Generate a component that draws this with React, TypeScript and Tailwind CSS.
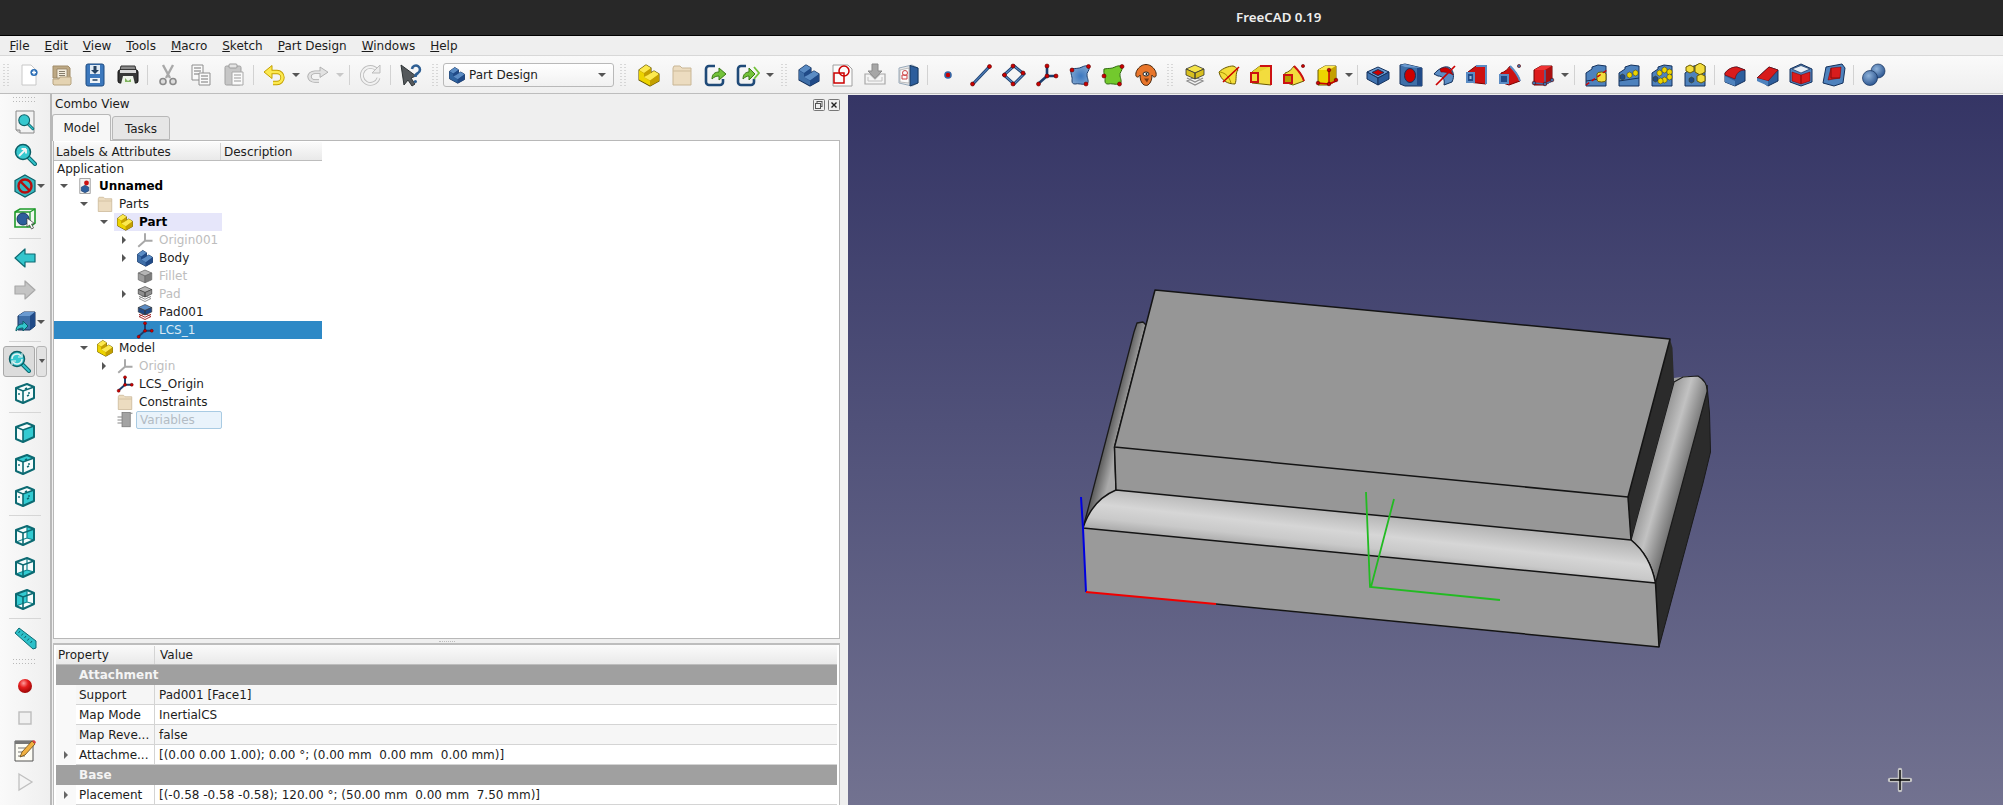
import React from "react";

type P = { children?: React.ReactNode; size?: number };
const I = ({ children, size = 24 }: P) => (
  <svg width={size} height={size} viewBox="0 0 24 24" className="block shrink-0">
    {children}
  </svg>
);

const Dot = ({ x, y, r = 2, c = "#cc0000" }: { x: number; y: number; r?: number; c?: string }) => (
  <circle cx={x} cy={y} r={r} fill={c} stroke="#5c0000" strokeWidth={0.6} />
);

const Y = { t: "#fce94f", l: "#edd400", r: "#c4a000", s: "#6b5a00" };
const B = { t: "#5b8cc4", l: "#3f6fa8", r: "#204a87", s: "#14315c" };
const G = { t: "#b5b5b5", l: "#9c9c9c", r: "#7d7d7d", s: "#6a6a6a" };

const LBlock = ({ t, l, r, s, size }: { t: string; l: string; r: string; s: string; size?: number }) => (
  <I size={size}>
    <path d="M2 7L9 2L14 5V10L17 8L22 11V18L13 23L2 17Z" fill={r} stroke={s} strokeWidth={1.1} strokeLinejoin="round" />
    <path d="M2 7L9 2L14 5L7 10Z" fill={t} />
    <path d="M2 7.500L7 10.500V14L13 18V22.500L2 16.500Z" fill={l} />
    <path d="M7 10.500L14 5.500V10L11 12L7 14Z" fill={r} />
    <path d="M7 14L11 12L17 8L22 11L13 17.500Z" fill={t} />
    <path d="M13 18L22 11.500V18L13 23Z" fill={r} />
  </I>
);

const Box = ({ t, l, r, s, size }: { t: string; l: string; r: string; s: string; size?: number }) => (
  <I size={size}>
    <path d="M12 4L21 8L12 12L3 8Z" fill={t} stroke={s} strokeLinejoin="round" />
    <path d="M3 8L12 12V21L3 17Z" fill={l} stroke={s} strokeLinejoin="round" />
    <path d="M21 8L12 12V21L21 17Z" fill={r} stroke={s} strokeLinejoin="round" />
  </I>
);

const Folder = ({ size }: P) => (
  <I size={size}>
    <path d="M3 5l1-2h6l2 2h9v17H3z" fill="#ecdcc0" stroke="#c9b695" />
    <path d="M3 8h18" stroke="#cdbb9b" />
  </I>
);

const IOpen = () => (
  <I>
    <path d="M3 3h15l2 2v10H3z" fill="#bda884" stroke="#a08b68" />
    <path d="M7 6h10v9H7z" fill="#f3ecdc" stroke="#8b7a5c" strokeWidth={0.7} />
    <path d="M9 8.500h6M9 10.500h6M9 12.500h6" stroke="#6b6250" strokeWidth={0.8} />
    <path d="M3 16h6l1-2h11v7l-1 1H4l-1-1z" fill="#e4d3b2" stroke="#b7a480" />
  </I>
);
const INew = () => (
  <I>
    <path d="M5 2h9l5 5v15H5z" fill="#fff" stroke="#c8c8c8" />
    <circle cx={17} cy={9.5} r={3.6} fill="#2a6db5" />
    <path d="M15 9.500h4M17 7.500v4" stroke="#fff" strokeWidth={1.4} />
  </I>
);
const ISave = () => (
  <I>
    <rect x={3} y={1} width={18} height={22} rx={2} fill="#3c78bd" stroke="#1c4a80" />
    <path d="M7 2h10v9H7z" fill="#dfe9f3" />
    <path d="M10.500 3h3v4h2.500l-4 4-4-4h2.500z" fill="#24405f" />
    <path d="M7 15h10v5H7z" fill="#eef3f8" />
    <path d="M9.500 17h5" stroke="#24405f" strokeWidth={1.5} />
  </I>
);
const IPrint = () => (
  <I>
    <path d="M5 3h14l1 4H4z" fill="#8a8a8a" stroke="#333" />
    <rect x={2} y={7} width={20} height={13} rx={2} fill="#363636" stroke="#111" />
    <path d="M4 7h16v3H4z" fill="#d8d8d8" />
    <path d="M7 13h10l2 8H5z" fill="#eef3ea" />
    <path d="M9 15l3 3 3-2v3H9z" fill="#7fb35e" />
  </I>
);
const ICut = () => (
  <I>
    <path d="M7 2l7 13M17 2l-7 13" stroke="#a9a9a9" strokeWidth={2.4} fill="none" />
    <circle cx={7} cy={18.5} r={3} fill="#dcdcdc" stroke="#8a8a8a" strokeWidth={1.6} />
    <circle cx={17} cy={18.5} r={3} fill="#dcdcdc" stroke="#8a8a8a" strokeWidth={1.6} />
  </I>
);
const ICopy = () => (
  <I>
    <path d="M3 2h11v15H3z" fill="#fafafa" stroke="#8e8e8e" />
    <path d="M5 5h7M5 8h7M5 11h7" stroke="#777" />
    <path d="M10 10h11v12H10z" fill="#fafafa" stroke="#8e8e8e" />
    <path d="M12 13h7M12 16h7M12 19h7" stroke="#777" />
  </I>
);
const IPaste = () => (
  <I>
    <rect x={3} y={3} width={16} height={19} rx={1.5} fill="#c6c6c6" stroke="#a0a0a0" />
    <rect x={7} y={1} width={8} height={4} rx={1} fill="#e4e4e4" stroke="#9c9c9c" />
    <path d="M10 9h11v13H10z" fill="#fafafa" stroke="#a8a8a8" />
    <path d="M12 12h7M12 15h7M12 18h7" stroke="#999" />
  </I>
);
const Curl = ({ a, b }: { a: string; b: string }) => (
  <>
    <path d="M6 9h9a5.500 5.500 0 0 1 0 11h-4" fill="none" stroke={b} strokeWidth={4.4} />
    <path d="M10 2.500L2 9l8 6.500z" fill={a} stroke={b} strokeLinejoin="round" />
    <path d="M8 9h7a5.500 5.500 0 0 1 0 11h-4" fill="none" stroke={a} strokeWidth={2.6} />
  </>
);
const IUndo = () => (
  <I>
    <Curl a="#fce94f" b="#c4a000" />
  </I>
);
const IRedo = () => (
  <I>
    <g transform="translate(24 2) scale(-1 0.8)">
      <Curl a="#e2e2e2" b="#acacac" />
    </g>
  </I>
);
const IRefresh = () => (
  <I>
    <path d="M18 7a8.500 8.500 0 1 0 1.500 8" fill="none" stroke="#bdbdbd" strokeWidth={3.8} />
    <path d="M18 7a8.500 8.500 0 1 0 1.500 8" fill="none" stroke="#f2f2f2" strokeWidth={2} />
    <path d="M21 2v8h-8z" fill="#ececec" stroke="#bdbdbd" />
  </I>
);
const IHelp = () => (
  <I>
    <path d="M2 2l3 20 4-5 4 6 3-2-4-6 5-2z" fill="#55595c" stroke="#2e3436" strokeLinejoin="round" />
    <path d="M13 6a4 4 0 1 1 6 4c-2 1-2.600 2-2.600 4" fill="none" stroke="#2f5f93" strokeWidth={2.6} />
    <circle cx={16.4} cy={18.5} r={1.6} fill="#2f5f93" />
  </I>
);
const ILinkA = () => (
  <I>
    <path d="M12 3H6a3 3 0 0 0-3 3v13a3 3 0 0 0 3 3h11a3 3 0 0 0 3-3v-3" fill="none" stroke="#1f4a78" strokeWidth={2.6} />
    <path d="M9 16c0-5 3-7 7-7V5l7 6-7 6v-4c-3 0-5 1-7 3z" fill="#73c23a" stroke="#3b7a16" strokeLinejoin="round" />
  </I>
);
const ILinkB = () => (
  <I>
    <path d="M10 3H5a3 3 0 0 0-3 3v13a3 3 0 0 0 3 3h10a3 3 0 0 0 3-3v-3" fill="none" stroke="#1f4a78" strokeWidth={2.6} />
    <path d="M7 16c0-5 3-7 6-7V5l6 6-6 6v-4c-2 0-4 1-6 3z" fill="#73c23a" stroke="#3b7a16" strokeLinejoin="round" />
    <path d="M18 4l5 6-5 6" fill="none" stroke="#73c23a" strokeWidth={1.8} />
  </I>
);
const ISketch = () => (
  <I>
    <path d="M3 2h15l4 4v17H3z" fill="#fbfbfb" stroke="#a0a0a0" />
    <rect x={4} y={10} width={10} height={10} fill="none" stroke="#cc0000" strokeWidth={1.5} />
    <circle cx={14} cy={8} r={5} fill="none" stroke="#cc0000" strokeWidth={1.5} />
  </I>
);
const IAttach = () => (
  <I>
    <path d="M9 1h6v7h4l-7 7-7-7h4z" fill="#a6a6a6" stroke="#8a8a8a" />
    <path d="M2 11h5l5 5 5-5h5v10H2z" fill="#f4f4f4" stroke="#a8a8a8" strokeWidth={1.2} />
    <path d="M5 14v4h14v-4" fill="none" stroke="#c0c0c0" />
  </I>
);
const IPlane = () => (
  <I>
    <path d="M3 5l13-3 6 3v15l-6 3-13-3z" fill="#e9e9e9" stroke="#99aabb" />
    <path d="M14 2.500l8 2.500v15l-8 3z" fill="#2d5e9c" stroke="#173860" />
    <path d="M4 7l9-2v15l-9-1z" fill="#fbfbfb" stroke="#999" strokeWidth={0.6} />
    <circle cx={9} cy={10} r={2.5} fill="none" stroke="#cc4444" />
    <path d="M6 12h5v4H6z" fill="none" stroke="#cc4444" />
  </I>
);
const IPoint = () => (
  <I>
    <circle cx={12} cy={12} r={3} fill="#cc0000" stroke="#3465a4" strokeWidth={1.6} />
  </I>
);
const ILine = () => (
  <I>
    <path d="M3 22L21 3" stroke="#1d3f6e" strokeWidth={3} />
    <path d="M3 22L21 3" stroke="#4a7ab5" strokeWidth={1.2} />
    <Dot x={3.5} y={21} />
    <Dot x={20.5} y={3.5} />
  </I>
);
const IDiamond = () => (
  <I>
    <path d="M12 3L22 11L12 21L2 12Z" fill="none" stroke="#1d3f6e" strokeWidth={3} />
    <path d="M12 3L22 11L12 21L2 12Z" fill="none" stroke="#5b8cc4" strokeWidth={1.1} />
    <Dot x={11} y={3} />
    <Dot x={21} y={10} />
    <Dot x={11} y={21} />
    <Dot x={2.5} y={12} />
  </I>
);
const Lcs = ({ size, a = "#1d3f6e", d = true }: { size?: number; a?: string; d?: boolean }) => (
  <I size={size}>
    <path d="M12 13V3M12 13H22M12 13L3 21" stroke={a} strokeWidth={2.6} fill="none" />
    {d && (
      <>
        <Dot x={12} y={3} />
        <Dot x={12} y={13} />
        <Dot x={21} y={13} />
        <Dot x={3.5} y={21} />
      </>
    )}
  </I>
);
const BLOB = "M3 6c5-1 7 0 11-2s6-1 7 0c1 4-3 5-2 9s2 6 0 8c-5 1-9-1-12 0-2 0-3-1-3-3 1-4-2-7-1-12z";
const IFace = () => (
  <I>
    <defs>
      <radialGradient id="rgFace" cx="0.55" cy="0.55" r="0.6">
        <stop offset="0" stopColor="#3c78c0" />
        <stop offset="1" stopColor="#7fa6d0" />
      </radialGradient>
    </defs>
    <path d={BLOB} fill="url(#rgFace)" stroke="#1d3f6e" />
    <Dot x={4} y={7} />
    <Dot x={20.5} y={3.5} />
    <Dot x={18} y={21} />
  </I>
);
const IGreen = () => (
  <I>
    <path d={BLOB} fill="#73c92d" stroke="#2f6b10" />
    <Dot x={21} y={3.5} />
    <Dot x={3} y={13} />
    <Dot x={18.5} y={21} />
  </I>
);
const IGnu = () => (
  <I>
    <path d="M7 3c3-2 7-2 10 0 3 2 6 6 5 10-1 2-3 1-4-1 0 4-1 8-4 10-2 1-3 0-4 0-3-2-4-6-4-10-1 2-3 3-4 1C1 9 4 5 7 3z" fill="#e8752a" stroke="#4a2a10" />
    <ellipse cx={12} cy={11} rx={3} ry={2} fill="#fff" stroke="#222" />
    <circle cx={12.5} cy={11} r={1} fill="#111" />
    <path d="M10 15.500l3 4 2-4z" fill="#7a3a12" />
  </I>
);
const PadIcon = ({ size, top, line = "#8c8c8c", side }: { size?: number; top: string; line?: string; side: string }) => (
  <I size={size}>
    <path d="M4 15l8 4 8-4M4 18l8 4 8-4-8-4z" fill="none" stroke={line} strokeWidth={1.2} />
    <path d="M12 2L21 6L12 10L3 6Z" fill={top} stroke="#333" strokeWidth={0.8} />
    <path d="M3 6v6l9 4V10zM21 6v6l-9 4V10z" fill={side} stroke="#333" strokeWidth={0.8} />
  </I>
);
const IRev = () => (
  <I>
    <path d="M3 9c4-4 10-6 14-6 1 0 4 2 5 4-3 3-1 10-3 14C12 21 5 18 3 9z" fill="#f4de3a" stroke="#6b5a00" />
    <path d="M3 9c4 0 10 3 12 11" fill="none" stroke="#a89200" />
    <path d="M7 19L23 4" stroke="#cc0000" strokeWidth={1.6} />
  </I>
);
const ILoft = () => (
  <I>
    <path d="M11 3h11v19l-19-2V9z" fill="#f2dc3e" stroke="#6b5a00" />
    <path d="M11 3h11L10 9 3 9z" fill="#e8d22e" />
    <path d="M11 3h11v19" fill="none" stroke="#cc1111" strokeWidth={2} />
    <rect x={2} y={10} width={7} height={9} fill="#f2dc3e" stroke="#cc1111" strokeWidth={2} />
  </I>
);
const IPipe = () => (
  <I>
    <path d="M12 3c4 4 8 8 10 15l-11 4-9-3 1-9c4-1 7-4 9-7z" fill="#f2dc3e" stroke="#6b5a00" />
    <path d="M12 3c4 4 8 8 10 15" fill="none" stroke="#cc1111" strokeWidth={2} />
    <rect x={2} y={12} width={8} height={8} fill="#b89d00" stroke="#cc1111" strokeWidth={2} />
    <Dot x={21} y={3} r={1.6} />
  </I>
);
const IPrim = ({ c = Y, dot = "#cc0000" }: { c?: typeof Y; dot?: string }) => (
  <I>
    <path d="M3 7l7-4h11v15l-7 4H3z" fill={c.l} stroke={c.s} />
    <path d="M3 7l7-4h11l-7 4z" fill={c.t} />
    <path d="M14 7v15l7-4V3z" fill={c.r} />
    <path d="M14 7v14M3 20l11 1 7-3" stroke={dot} fill="none" strokeWidth={1.5} />
    <Dot x={14} y={7} r={1.8} c={dot} />
    <Dot x={14} y={21} r={1.8} c={dot} />
    <Dot x={3} y={20} r={1.8} c={dot} />
    <Dot x={21} y={17} r={1.8} c={dot} />
  </I>
);
const IPocket = () => (
  <I>
    <path d="M12 4L23 9L12 15L1 9Z" fill="#6a9ad0" stroke="#14315c" strokeLinejoin="round" />
    <path d="M1 9L12 15V22L1 16Z" fill="#4174b0" stroke="#14315c" strokeLinejoin="round" />
    <path d="M23 9L12 15V22L23 16Z" fill="#2a5a9a" stroke="#14315c" strokeLinejoin="round" />
    <path d="M12 6.500L18 9.500L12 12.500L6 9.500Z" fill="#cc0000" stroke="#14315c" />
  </I>
);
const IHole = () => (
  <I>
    <path d="M1 2l5-1 17 4v18L6 23 1 21z" fill="#3f6fa8" stroke="#14315c" />
    <path d="M1 2l5-1 17 4-17-1z" fill="#6a9ad0" />
    <ellipse cx={11} cy={12.5} rx={5.5} ry={7} fill="#cc0000" stroke="#14315c" />
    <path d="M18 5l5 0v18l-5-1z" fill="#204a87" />
  </I>
);
const IGroove = () => (
  <I>
    <path d="M2 11c5-6 12-9 16-6 3 2 5 8 2 14l-8 3c1-6-1-9-6-9z" fill="#5b8cc4" stroke="#14315c" />
    <path d="M8 6c5-2 8-2 11 2l2 4c-4-3-9-3-12-3z" fill="#cc0000" stroke="#7a0000" strokeWidth={0.6} />
    <path d="M4 22L23 3" stroke="#cc0000" strokeWidth={1.7} />
  </I>
);
const ISubLoft = () => (
  <I>
    <path d="M11 3h10v18l-18-2V9z" fill="#cc1111" stroke="#7a0000" />
    <path d="M11 3h10v18" fill="none" stroke="#5b8cc4" strokeWidth={2} />
    <rect x={2} y={10} width={7} height={9} fill="#204a87" stroke="#5b8cc4" strokeWidth={2} />
    <rect x={4.5} y={13} width={2} height={3} fill="#9cb8d8" />
  </I>
);
const ISubPipe = () => (
  <I>
    <path d="M12 3c4 4 8 8 10 15l-11 4-9-3 1-9c4-1 7-4 9-7z" fill="#cc1111" stroke="#7a0000" />
    <path d="M12 3c4 4 8 8 10 15" fill="none" stroke="#5b8cc4" strokeWidth={2} />
    <rect x={2} y={12} width={8} height={8} fill="#204a87" stroke="#5b8cc4" strokeWidth={2} />
    <Dot x={21} y={3} r={1.6} c="#3f6fa8" />
  </I>
);
const ISubPrim = () => (
  <I>
    <path d="M3 7l7-4h11v15l-7 4H3z" fill="#dd1a1a" stroke="#6a0000" />
    <path d="M3 7l7-4h11l-7 4z" fill="#ee3333" />
    <path d="M14 7v15l7-4V3z" fill="#aa0f0f" />
    <path d="M14 7v14M3 20l11 1 7-3" stroke="#3f6fa8" fill="none" strokeWidth={1.5} />
    <Dot x={14} y={21} r={1.8} c="#3f6fa8" />
    <Dot x={3} y={20} r={1.8} c="#3f6fa8" />
    <Dot x={21} y={17} r={1.8} c="#3f6fa8" />
  </I>
);
const Slab = () => (
  <path d="M2 17L2 10L8 6V4L14 2L22 3V23H2Z" fill="#4e82bd" stroke="#14315c" strokeLinejoin="round" />
);
const Cubelet = ({ x, y, c = "#edd400" }: { x: number; y: number; c?: string }) => (
  <path
    transform={`translate(${x} ${y})`}
    d="M0 1.500L2.500 0L5 1.500V4.500L2.500 6L0 4.500Z"
    fill={c}
    stroke="#443a00"
    strokeWidth={0.5}
  />
);
const IMirror = () => (
  <I>
    <Slab />
    <path d="M2 18l20-3" stroke="#14315c" />
    <path d="M13 11a4.500 2 0 0 1 9 0v6a4.500 2 0 0 1-9 0z" fill="#f2dc3e" stroke="#6b5a00" />
    <path d="M2 22L23 7" stroke="#cc0000" strokeWidth={1.4} strokeDasharray="4 3" />
  </I>
);
const ILinear = () => (
  <I>
    <Slab />
    <path d="M2 18l20-3" stroke="#14315c" />
    <Cubelet x={3} y={11} c="#204a87" />
    <Cubelet x={10} y={9} />
    <Cubelet x={16} y={7} />
  </I>
);
const IPolar = () => (
  <I>
    <Slab />
    <Cubelet x={3} y={13} c="#204a87" />
    <Cubelet x={7} y={7} />
    <Cubelet x={12} y={4} />
    <Cubelet x={17} y={6} />
    <Cubelet x={17} y={11} />
    <Cubelet x={12} y={14} />
    <Cubelet x={8} y={15} />
  </I>
);
const IMulti = () => (
  <I>
    <Slab />
    <Cubelet x={6} y={14} c="#204a87" />
    <path d="M3 4l4-2 4 2v4l-4 2-4-2z" fill="#f2dc3e" stroke="#6b5a00" />
    <path d="M12 3l5-3 5 3v6l-5 3-5-3z" fill="#f2dc3e" stroke="#6b5a00" />
    <path d="M14 13l4-2 4 2v5l-4 2-4-2z" fill="#f2dc3e" stroke="#6b5a00" />
  </I>
);
const IFilletB = () => (
  <I>
    <path d="M2 10c3-4 8-6 12-6l8 3v11l-10 5-10-4z" fill="#2d5e9c" stroke="#14315c" />
    <path d="M2 10c4-5 8-6 12-6l8 3c-5 0-9 3-10 9L2 12z" fill="#d81c1c" stroke="#7a0000" strokeWidth={0.6} />
    <path d="M2 13l10 5v5l-10-4z" fill="#4e82bd" />
  </I>
);
const IChamfer = () => (
  <I>
    <path d="M1 15L13 4l9 3v11l-10 5z" fill="#2d5e9c" stroke="#14315c" />
    <path d="M1 15L13 4l9 3-10 11z" fill="#d81c1c" stroke="#7a0000" strokeWidth={0.6} />
    <path d="M1 15l11 3v5L1 18z" fill="#4e82bd" />
  </I>
);
const IDraft = () => (
  <I>
    <path d="M12 1L23 6v13l-11 4-11-4V6z" fill="#4e82bd" stroke="#14315c" />
    <path d="M3 9l9 3v9l-9-3zM21 9l-9 3v9l9-3z" fill="#d81c1c" stroke="#7a0000" strokeWidth={0.5} />
    <path d="M3 6L12 2.500l9 3.500-9 4z" fill="#e8eef5" stroke="#14315c" strokeWidth={0.7} />
  </I>
);
const IThick = () => (
  <I>
    <path d="M4 4L20 1l3 4-2 15-9 3-11-3z" fill="#4e82bd" stroke="#14315c" />
    <path d="M9 5l10-1-1 11-12 2z" fill="#d81c1c" stroke="#7a0000" strokeWidth={0.5} />
    <path d="M9 5v10l9 0" fill="none" stroke="#8a0b0b" />
  </I>
);
const IBool = () => (
  <I>
    <defs>
      <radialGradient id="rgBool" cx="0.4" cy="0.35" r="0.75">
        <stop offset="0" stopColor="#8fb3db" />
        <stop offset="1" stopColor="#204a87" />
      </radialGradient>
    </defs>
    <circle cx={16} cy={8} r={7} fill="url(#rgBool)" stroke="#14315c" strokeWidth={0.7} />
    <circle cx={8} cy={15} r={7.5} fill="url(#rgBool)" stroke="#14315c" strokeWidth={0.7} />
  </I>
);
const IDoc = () => (
  <I>
    <path d="M5 2h14v20H5z" fill="#f2f2f2" stroke="#8a8a8a" />
    <path d="M12 11l5 2.500v5L12 21l-5-2.500v-5z" fill="#2d5e9c" stroke="#14315c" strokeWidth={0.7} />
    <circle cx={14} cy={8} r={3.2} fill="#cc1111" />
  </I>
);
const Var = ({ size }: P) => (
  <I size={size}>
    <rect x={8} y={2} width={11} height={19} fill="#a3a3a3" stroke="#777" />
    <path d="M2 8h6M2 12h6M2 16h6M19 3h3" stroke="#888" strokeWidth={1.5} />
  </I>
);

/* Left bar icons */
const Mag = ({ children }: { children?: React.ReactNode }) => (
  <>
    <path d="M15 15l7 7" stroke="#0c6a72" strokeWidth={4} strokeLinecap="round" />
    <path d="M15 15l7 7" stroke="#33c5cc" strokeWidth={1.8} strokeLinecap="round" />
    <circle cx={10} cy={10} r={7.5} fill="#37c8cf" stroke="#0c5f66" strokeWidth={1.5} />
    {children}
  </>
);
const IFitAll = () => (
  <I>
    <path d="M3 1h18v22H7l-4-3z" fill="#f2f2f2" stroke="#8a8a8a" />
    <path d="M3 20h4v3" fill="#cfcfcf" stroke="#8a8a8a" />
    <g transform="translate(4 3) scale(0.72)">
      <Mag />
    </g>
  </I>
);
const IFitSel = () => (
  <I>
    <Mag>
      <path d="M6 14L13 7M13 7H8.500M13 7v4.500" stroke="#f4f4f4" strokeWidth={1.8} fill="none" />
    </Mag>
  </I>
);
const IDraw = () => (
  <I>
    <path d="M12 1l10 5.500v11L12 23 2 17.500v-11z" fill="#36b9c1" stroke="#0c5f66" strokeWidth={1.2} />
    <circle cx={12} cy={12} r={6.5} fill="none" stroke="#b80d0d" strokeWidth={2.4} />
    <path d="M7.500 7.500l9 9" stroke="#b80d0d" strokeWidth={2.4} />
  </I>
);
const IBound = () => (
  <I>
    <path d="M2 6l5-3h15v14l-5 4H2z" fill="#f2f7f2" stroke="#1e9a2a" strokeWidth={1.6} />
    <path d="M2 6h15v15M17 6l5-3" fill="none" stroke="#1e9a2a" strokeWidth={1.3} />
    <circle cx={10} cy={13} r={6} fill="#2d5e9c" stroke="#173860" />
    <path d="M14 12l0 9 2.500-2 2 4 2-1-2-4 3-.5z" fill="#fff" stroke="#333" strokeWidth={0.7} />
  </I>
);
const Arrow = ({ a, b, flip }: { a: string; b: string; flip?: boolean }) => (
  <I>
    <path
      d="M2 12L12 3v5h10v8H12v5z"
      transform={flip ? "translate(24 0) scale(-1 1)" : undefined}
      fill={a}
      stroke={b}
      strokeWidth={1.2}
      strokeLinejoin="round"
    />
  </I>
);
const ISync = () => (
  <I>
    <path d="M5 6l6-4h11v14l-5 4H5z" fill="#3f6fa8" stroke="#14315c" />
    <path d="M5 6l6-4h11l-5 4z" fill="#6a9ad0" />
    <path d="M17 6v14l5-4V2z" fill="#204a87" />
    <path d="M3 21c0-5 3-7 7-7v-3l5 5-5 5v-3c-3 0-5 1-7 3z" fill="#33c5cc" stroke="#0c5f66" strokeLinejoin="round" />
  </I>
);
const IZoom = () => (
  <I>
    <Mag>
      <path d="M5 10a5 5 0 0 1 9-3M15 10a5 5 0 0 1-9 3" fill="none" stroke="#e6f2f2" strokeWidth={1.5} />
      <path d="M15 4v4h-4M5 16v-4h4" fill="none" stroke="#e6f2f2" strokeWidth={1.2} />
    </Mag>
  </I>
);
const OUT = "M3 7L14 3L21 6V17L10 22L3 19Z";
const Tc = ({ f, arrows }: { f?: string; arrows?: boolean }) => (
  <I>
    <path d={OUT} fill="#f6fcfc" />
    {f && <path d={f} fill="#33cbd2" />}
    <path d="M3 7L10 10L21 6M10 10V22" fill="none" stroke="#0c6a72" strokeWidth={1.6} />
    {arrows && <path d="M14 7l-2 1M6 12v2M16 14l-2 1M16 11v2" stroke="#0c6a72" strokeWidth={1.4} />}
    <path d={OUT} fill="none" stroke="#0c6a72" strokeWidth={2} strokeLinejoin="round" />
  </I>
);
const Tr = ({ f }: { f: string }) => (
  <I>
    <path d={OUT} fill="#f6fcfc" />
    <path d={f} fill="#33cbd2" />
    <path d="M14 3V15M3 19L14 15M21 17L14 15" fill="none" stroke="#12858e" strokeWidth={1.2} />
    <path d="M3 7L10 10L21 6M10 10V22" fill="none" stroke="#0c6a72" strokeWidth={1.6} />
    <path d={OUT} fill="none" stroke="#0c6a72" strokeWidth={2} strokeLinejoin="round" />
  </I>
);
const IRuler = () => (
  <I>
    <path d="M2 7L6 2 23 15v7l-3 1z" fill="#2cc0c9" stroke="#0c6a72" strokeLinejoin="round" />
    <path d="M7 5l-1.500 2M10 7.500l-1.500 2M13 10l-1.500 2M16 12.500l-1.500 2M19 15l-1.500 2" stroke="#0c5f66" />
  </I>
);
const IRec = () => (
  <I>
    <defs>
      <radialGradient id="rgRec" cx="0.4" cy="0.3" r="0.8">
        <stop offset="0" stopColor="#ff9c9c" />
        <stop offset="0.4" stopColor="#e51c1c" />
        <stop offset="1" stopColor="#8a0000" />
      </radialGradient>
    </defs>
    <circle cx={12} cy={12} r={7} fill="url(#rgRec)" />
  </I>
);
const IStop = () => (
  <I>
    <rect x={6} y={6} width={12} height={12} fill="#f0f0f0" stroke="#bcbcbc" strokeWidth={1.4} />
  </I>
);
const IEdit = () => (
  <I>
    <path d="M2 3h18v20H2z" fill="#fdfcf4" stroke="#555" />
    <path d="M2 3h18v3H2z" fill="#777" />
    <path d="M5 10h8M5 14h6M5 18h7" stroke="#777" />
    <path d="M7 19l2-5L19 3l3 3-10 11z" fill="#f0b040" stroke="#6a4a10" strokeWidth={0.8} />
    <path d="M19 3l3 3 1-2-2-2z" fill="#d84040" />
  </I>
);
const IPlay = () => (
  <I>
    <path d="M6 4l13 8-13 8z" fill="#f4f4f4" stroke="#c0c0c0" strokeWidth={1.3} />
  </I>
);

/* Bar parts */
const Grip = ({ row }: { row?: boolean }) => (
  <svg width={row ? 24 : 6} height={row ? 6 : 22} className="block">
    {Array.from({ length: 8 }).flatMap((_, i) =>
      [0, 1].map((j) => (
        <rect
          key={`${i}${j}`}
          x={row ? i * 3 : j * 4 + 0.5}
          y={row ? j * 4 : i * 3}
          width={1}
          height={1}
          fill="#b9b9b9"
        />
      ))
    )}
  </svg>
);
const Btn = ({ children }: { children: React.ReactNode }) => (
  <div className="flex h-full w-[33px] shrink-0 items-center justify-center">{children}</div>
);
const Caret = ({ on = true }: { on?: boolean }) => (
  <div className="flex h-full w-[11px] shrink-0 items-center justify-center">
    <div
      className={`h-0 w-0 border-x-[4px] border-t-[4px] border-x-transparent ${on ? "border-t-[#555555]" : "border-t-[#c8c8c8]"}`}
    />
  </div>
);
const VSep = ({ className }: { className: string }) => (
  <div className={`flex h-full shrink-0 items-center justify-center ${className}`}>
    <div className="h-[20px] w-px bg-[#d2d2d2]" />
  </div>
);
const GripBox = ({ className }: { className: string }) => (
  <div className={`flex h-full shrink-0 items-center justify-center ${className}`}>
    <Grip />
  </div>
);
const SideBtn = ({ children, caret }: { children: React.ReactNode; caret?: boolean }) => (
  <div className="relative flex h-[32px] w-[50px] items-center justify-center">
    {children}
    {caret && (
      <div className="absolute left-[37px] top-[14px] h-0 w-0 border-x-[4px] border-t-[4px] border-x-transparent border-t-[#555555]" />
    )}
  </div>
);
const HSep = ({ className }: { className: string }) => (
  <div className={`flex w-[50px] items-center justify-center ${className}`}>
    <div className="h-px w-[32px] bg-[#d6d6d6]" />
  </div>
);

const Arr = ({ open, c = "#555555" }: { open?: boolean; c?: string }) =>
  open ? (
    <div className="h-0 w-0 border-x-[4px] border-t-[4px] border-x-transparent" style={{ borderTopColor: c }} />
  ) : (
    <div className="h-0 w-0 border-y-[4px] border-l-[4px] border-y-transparent" style={{ borderLeftColor: c }} />
  );

type RowT = {
  lvl: number;
  icon: React.ReactNode;
  text: string;
  arrow?: "o" | "c";
  bold?: boolean;
  muted?: boolean;
  part?: boolean;
  sel?: boolean;
  edit?: boolean;
};
const rows: RowT[] = [
  { lvl: 0, arrow: "o", icon: <IDoc />, text: "Unnamed", bold: true },
  { lvl: 1, arrow: "o", icon: <Folder />, text: "Parts" },
  { lvl: 2, arrow: "o", icon: <LBlock {...Y} />, text: "Part", bold: true, part: true },
  { lvl: 3, arrow: "c", icon: <Lcs a="#a8a8a8" d={false} />, text: "Origin001", muted: true },
  { lvl: 3, arrow: "c", icon: <LBlock {...B} />, text: "Body" },
  { lvl: 3, icon: <Box {...G} />, text: "Fillet", muted: true },
  { lvl: 3, arrow: "c", icon: <PadIcon top="#b5b5b5" side="#8f8f8f" />, text: "Pad", muted: true },
  { lvl: 3, icon: <PadIcon top="#5b8cc4" side="#204a87" line="#a02020" />, text: "Pad001" },
  { lvl: 3, icon: <Lcs />, text: "LCS_1", sel: true },
  { lvl: 1, arrow: "o", icon: <LBlock {...Y} />, text: "Model" },
  { lvl: 2, arrow: "c", icon: <Lcs a="#a8a8a8" d={false} />, text: "Origin", muted: true },
  { lvl: 2, icon: <Lcs />, text: "LCS_Origin" },
  { lvl: 2, icon: <Folder />, text: "Constraints" },
  { lvl: 2, icon: <Var />, text: "Variables", edit: true },
];

const PAD = ["pl-0", "pl-[20px]", "pl-[40px]", "pl-[60px]"];

const TreeRow = ({ r }: { r: RowT }) => (
  <div className={`flex h-[18px] items-center ${PAD[r.lvl]} ${r.sel ? "bg-[#2e89c6]" : ""}`}>
    <div className="flex h-full w-[20px] shrink-0 items-center justify-center">
      {r.arrow && <Arr open={r.arrow === "o"} />}
    </div>
    <div className={`flex h-full items-center ${r.part ? "w-[108px] bg-[#e6e6fa]" : ""}`}>
      <div className="flex w-[22px] shrink-0 justify-center [&>svg]:h-[18px] [&>svg]:w-[18px]">{r.icon}</div>
      {r.edit ? (
        <div className="flex h-[18px] w-[86px] items-center rounded-[2px] border border-[#a9cbe3] bg-[#e9f3fb] pl-[3px] text-[#b3bcc4]">
          {r.text}
        </div>
      ) : (
        <span
          className={`ml-[3px] whitespace-nowrap ${r.bold ? "font-bold text-black" : ""} ${
            r.muted ? "text-[#bdbdbd]" : r.sel ? "text-[#dbe9f4]" : ""
          }`}
        >
          {r.text}
        </span>
      )}
    </div>
  </div>
);

const PropSection = ({ t }: { t: string }) => (
  <div className="flex h-[20px] items-center bg-[#a0a0a0] pl-[23px] font-bold text-[#f4f4f4]">{t}</div>
);
const PropRow = ({ k, v, alt, arrow }: { k: string; v: string; alt?: boolean; arrow?: boolean }) => (
  <div className={`flex h-[20px] ${alt ? "bg-[#f6f6f6]" : "bg-white"}`}>
    <div className="flex w-[20px] shrink-0 items-center justify-center bg-[#f9f9f9]">
      {arrow && <Arr c="#666666" />}
    </div>
    <div className="flex min-w-0 flex-1 border-b border-[#d4d4d4]">
      <div className="flex w-[79px] shrink-0 items-center border-r border-[#d4d4d4] pl-[3px]">{k}</div>
      <div className="flex items-center whitespace-pre pl-[4px]">{v}</div>
    </div>
  </div>
);

const Model = () => (
  <svg viewBox="848 95 1155 710" className="block h-full w-full">
    <defs>
      <linearGradient id="gF" gradientUnits="userSpaceOnUse" x1="1362" y1="513" x2="1357" y2="558">
        <stop offset="0" stopColor="#b4b4b4" />
        <stop offset="0.45" stopColor="#d6d6d6" />
        <stop offset="0.75" stopColor="#c9c9c9" />
        <stop offset="1" stopColor="#a9a9a9" />
      </linearGradient>
      <linearGradient id="gR" gradientUnits="userSpaceOnUse" x1="1640" y1="470" x2="1692" y2="485">
        <stop offset="0" stopColor="#808080" />
        <stop offset="0.45" stopColor="#c2c2c2" />
        <stop offset="0.8" stopColor="#7a7a7a" />
        <stop offset="1" stopColor="#3a3a3a" />
      </linearGradient>
      <linearGradient id="gL" gradientUnits="userSpaceOnUse" x1="1106" y1="425" x2="1122" y2="429">
        <stop offset="0" stopColor="#484848" />
        <stop offset="1" stopColor="#aaaaaa" />
      </linearGradient>
    </defs>
    <path d="M1674 378L1688 376V384H1674Z" fill="#9c9c9c" />
    <path d="M1083 528L1087 513L1134 332L1137 323L1143 322L1146 325L1114.500 447L1116 490Z" fill="url(#gL)" stroke="#1a1a1a" strokeWidth={1.3} strokeLinejoin="round" />
    <path d="M1655.500 583L1659 647L1703 483L1710.500 452L1709.500 413L1707 385Z" fill="#2b2b2b" stroke="#1a1a1a" />
    <path d="M1631 540Q1650 555 1655.500 583L1707 392Q1708 382 1698 376L1683 377L1674 382Z" fill="url(#gR)" stroke="#1a1a1a" strokeWidth={1.2} strokeLinejoin="round" />
    <path d="M1670 339L1672.500 348L1674 382L1631 540L1628 510L1628 497Z" fill="#2b2b2b" />
    <path d="M1155 290L1670 339L1628 497L1114.500 447Z" fill="#969696" />
    <path d="M1114.500 447L1628 497L1631 540L1116 490Z" fill="#979797" />
    <path d="M1116 490L1631 540Q1650 555 1655.500 583L1083 528Q1092 500 1116 490Z" fill="url(#gF)" />
    <path d="M1083 528L1655.500 583L1659 647L1086 592Z" fill="#9a9a9a" />
    <g fill="none" stroke="#141414" strokeWidth={1.5} strokeLinejoin="round">
      <path d="M1155 290L1670 339L1628 497L1114.500 447Z" />
      <path d="M1114.500 447L1116 490" />
      <path d="M1628 497L1631 540" />
      <path d="M1116 490L1631 540Q1650 555 1655.500 583L1083 528Q1092 500 1116 490Z" />
      <path d="M1216 604L1659 647L1655.500 583" />
    </g>
    <path d="M1081 497L1083 528L1086 592" fill="none" stroke="#0000e0" strokeWidth={2} />
    <path d="M1086 592L1216 604" stroke="#f00000" strokeWidth={2} />
    <path d="M1366 492L1370 587L1500 600M1394 499L1371 587" fill="none" stroke="#22bb22" strokeWidth={1.8} />
    <path d="M1890 780H1910M1900 770V790" stroke="#c4c4c4" strokeWidth={4.5} strokeLinecap="round" />
    <path d="M1890 780H1910M1900 770V790" stroke="#000" strokeWidth={1.4} />
  </svg>
);

export default function App() {
  return (
    <div className="flex h-[805px] w-[2003px] flex-col overflow-hidden bg-[#efefef] font-['DejaVu_Sans',sans-serif] text-[12px] text-[#1c1c1c]">
      {/* title bar */}
      <div className="flex h-[36px] shrink-0 items-center border-b border-black bg-[#282828] pl-[1236px] font-['Noto_Sans',sans-serif] text-[13.300px] font-semibold text-[#eeeeee]">
        FreeCAD 0.19
      </div>
      {/* menu */}
      <div className="flex h-[20px] shrink-0 items-center border-b border-[#d8d8d8] pl-[2px]">
        {[
          ["F", "ile"],
          ["E", "dit"],
          ["V", "iew"],
          ["T", "ools"],
          ["M", "acro"],
          ["S", "ketch"],
          ["P", "art Design"],
          ["W", "indows"],
          ["H", "elp"],
        ].map(([a, b]) => (
          <div key={a} className="px-[7.500px]">
            <u>{a}</u>
            {b}
          </div>
        ))}
      </div>
      {/* toolbar */}
      <div className="flex h-[38px] shrink-0 items-center border-b border-[#bdbdbd] bg-gradient-to-b from-[#fafafa] to-[#efefef] pt-[1px]">
        <GripBox className="w-[12px]" />
        <Btn><INew /></Btn>
        <Btn><IOpen /></Btn>
        <Btn><ISave /></Btn>
        <Btn><IPrint /></Btn>
        <VSep className="w-[7px]" />
        <Btn><ICut /></Btn>
        <Btn><ICopy /></Btn>
        <Btn><IPaste /></Btn>
        <VSep className="w-[7px]" />
        <Btn><IUndo /></Btn>
        <Caret />
        <Btn><IRedo /></Btn>
        <Caret on={false} />
        <VSep className="w-[9px]" />
        <Btn><IRefresh /></Btn>
        <VSep className="w-[7px]" />
        <Btn><IHelp /></Btn>
        <GripBox className="w-[16px]" />
        <div className="flex h-[24px] w-[171px] shrink-0 items-center rounded-[3px] border border-[#b9b9b9] bg-gradient-to-b from-white to-[#f1f1f1] pl-[4px]">
          <LBlock t="#5b8cc4" l="#2f639f" r="#204a87" s="#14315c" size={18} />
          <span className="ml-[3px] flex-1 whitespace-nowrap">Part Design</span>
          <div className="mr-[7px] h-0 w-0 border-x-[4px] border-t-[4px] border-x-transparent border-t-[#555555]" />
        </div>
        <GripBox className="w-[18px]" />
        <Btn><LBlock {...Y} /></Btn>
        <Btn><Folder /></Btn>
        <Btn><ILinkA /></Btn>
        <Btn><ILinkB /></Btn>
        <Caret />
        <GripBox className="w-[17px]" />
        <Btn><LBlock {...B} /></Btn>
        <Btn><ISketch /></Btn>
        <Btn><IAttach /></Btn>
        <Btn><IPlane /></Btn>
        <VSep className="w-[7px]" />
        <Btn><IPoint /></Btn>
        <Btn><ILine /></Btn>
        <Btn><IDiamond /></Btn>
        <Btn><Lcs /></Btn>
        <Btn><IFace /></Btn>
        <Btn><IGreen /></Btn>
        <Btn><IGnu /></Btn>
        <GripBox className="w-[16px]" />
        <Btn><PadIcon top="#f4e34a" side="#d8c020" /></Btn>
        <Btn><IRev /></Btn>
        <Btn><ILoft /></Btn>
        <Btn><IPipe /></Btn>
        <Btn><IPrim /></Btn>
        <Caret />
        <VSep className="w-[7px]" />
        <Btn><IPocket /></Btn>
        <Btn><IHole /></Btn>
        <Btn><IGroove /></Btn>
        <Btn><ISubLoft /></Btn>
        <Btn><ISubPipe /></Btn>
        <Btn><ISubPrim /></Btn>
        <Caret />
        <VSep className="w-[9px]" />
        <Btn><IMirror /></Btn>
        <Btn><ILinear /></Btn>
        <Btn><IPolar /></Btn>
        <Btn><IMulti /></Btn>
        <VSep className="w-[7px]" />
        <Btn><IFilletB /></Btn>
        <Btn><IChamfer /></Btn>
        <Btn><IDraft /></Btn>
        <Btn><IThick /></Btn>
        <VSep className="w-[7px]" />
        <Btn><IBool /></Btn>
      </div>
      {/* main */}
      <div className="flex min-h-0 flex-1">
        {/* left bar */}
        <div className="flex w-[52px] shrink-0 flex-col border-r-[2px] border-[#b8b8b8] bg-gradient-to-r from-[#fafafa] to-[#efefef]">
          <div className="flex h-[12px] w-[50px] items-center justify-center"><Grip row /></div>
          <SideBtn><IFitAll /></SideBtn>
          <SideBtn><IFitSel /></SideBtn>
          <SideBtn caret><IDraw /></SideBtn>
          <SideBtn><IBound /></SideBtn>
          <HSep className="h-[8px]" />
          <SideBtn><Arrow a="#33c5cc" b="#0c6a72" /></SideBtn>
          <SideBtn><Arrow a="#c4c4c4" b="#a8a8a8" flip /></SideBtn>
          <SideBtn caret><ISync /></SideBtn>
          <HSep className="h-[7px]" />
          <div className="flex h-[32px] w-[50px] items-center gap-[1px] pl-[3px]">
            <div className="flex h-[31px] w-[32px] items-center justify-center rounded-[3px] border border-[#a9a9a9] bg-[#dcdcdc]"><IZoom /></div>
            <div className="flex h-[31px] w-[11px] items-center justify-center rounded-[3px] border border-[#b5b5b5] bg-[#e2e2e2]">
              <div className="h-0 w-0 border-x-[3.500px] border-t-[4px] border-x-transparent border-t-[#555555]" />
            </div>
          </div>
          <SideBtn><Tc arrows /></SideBtn>
          <HSep className="h-[7px]" />
          <SideBtn><Tc f="M10 10L21 6V17L10 22Z" /></SideBtn>
          <SideBtn><Tc f="M3 7L14 3L21 6L10 10Z" arrows /></SideBtn>
          <SideBtn><Tc f="M10 10L21 6V17L10 22Z" arrows /></SideBtn>
          <HSep className="h-[7px]" />
          <SideBtn><Tr f="M14 3L21 6V17L14 15Z" /></SideBtn>
          <SideBtn><Tr f="M3 19L14 15L21 17L10 22Z" /></SideBtn>
          <SideBtn><Tr f="M3 7L14 3V15L3 19Z" /></SideBtn>
          <HSep className="h-[7px]" />
          <SideBtn><IRuler /></SideBtn>
          <div className="flex h-[16px] w-[50px] items-center justify-center"><Grip row /></div>
          <SideBtn><IRec /></SideBtn>
          <SideBtn><IStop /></SideBtn>
          <SideBtn><IEdit /></SideBtn>
          <SideBtn><IPlay /></SideBtn>
        </div>
        {/* combo view */}
        <div className="flex w-[796px] shrink-0 flex-col pl-px pr-[8px]">
          <div className="flex h-[20px] shrink-0 items-center justify-between pl-[2px]">
            <span>Combo View</span>
            <div className="flex gap-[3px] pt-[2px]">
              <svg width="12" height="12" viewBox="0 0 12 12" className="block">
                <rect x="0.500" y="0.500" width="11" height="11" rx="1" fill="#efefef" stroke="#777" />
                <rect x="4" y="2.500" width="5" height="5" fill="none" stroke="#555" />
                <rect x="2.500" y="4.500" width="5" height="5" fill="#efefef" stroke="#555" />
              </svg>
              <svg width="12" height="12" viewBox="0 0 12 12" className="block">
                <rect x="0.500" y="0.500" width="11" height="11" rx="1" fill="#efefef" stroke="#777" />
                <path d="M3.500 3.500l5 5M8.500 3.500l-5 5" stroke="#222" strokeWidth="1.400" />
              </svg>
            </div>
          </div>
          <div className="flex h-[26px] shrink-0 items-end">
            <div className="z-10 -mb-px -ml-px flex h-[27px] w-[59px] items-center justify-center rounded-t-[3px] border border-b-0 border-[#b8b8b8] bg-[#f7f7f7]">
              Model
            </div>
            <div className="ml-px flex h-[24px] w-[58px] items-center justify-center rounded-t-[3px] border border-[#b8b8b8] bg-[#e6e6e6] pt-[1px]">
              Tasks
            </div>
          </div>
          {/* tree */}
          <div className="h-[499px] shrink-0 border border-[#b8b8b8] bg-white pt-[1px]">
            <div className="flex h-[19px] w-[268px] border-b border-[#bdbdbd] bg-gradient-to-b from-[#fbfbfb] to-[#e9e9e9] pt-[1px]">
              <div className="flex w-[167px] items-center border-r border-[#d4d4d4] pl-[2px]">Labels &amp; Attributes</div>
              <div className="flex flex-1 items-center pl-[3px]">Description</div>
            </div>
            <div className="flex h-[16px] items-center pl-[3px]">Application</div>
            {rows.map((r) => (
              <div key={r.text} className="w-[268px]">
                <TreeRow r={r} />
              </div>
            ))}
          </div>
          <div className="flex h-[4px] shrink-0 items-center justify-center">
            <div className="h-px w-[16px] border-t border-dotted border-[#bdbdbd]" />
          </div>
          {/* property */}
          <div className="min-h-0 flex-1 border-x border-t-[2px] border-[#bdbdbd] bg-white px-[2px]">
            <div className="flex h-[20px] border-b border-[#bdbdbd] bg-gradient-to-b from-[#fbfbfb] to-[#e9e9e9] pt-[1px]">
              <div className="flex w-[99px] items-center border-r border-[#d4d4d4] pl-[2px]">Property</div>
              <div className="flex items-center pl-[5px]">Value</div>
            </div>
            <PropSection t="Attachment" />
            <PropRow k="Support" v="Pad001 [Face1]" alt />
            <PropRow k="Map Mode" v="InertialCS" />
            <PropRow k="Map Reve..." v="false" alt />
            <PropRow k="Attachme..." v="[(0.00 0.00 1.00); 0.00 °; (0.00 mm  0.00 mm  0.00 mm)]" arrow />
            <PropSection t="Base" />
            <PropRow k="Placement" v="[(-0.58 -0.58 -0.58); 120.00 °; (50.00 mm  0.00 mm  7.50 mm)]" arrow />
          </div>
        </div>
        {/* 3D view */}
        <div className="min-w-0 flex-1 pt-px">
          <div className="h-full bg-gradient-to-b from-[#353565] to-[#727290]">
            <Model />
          </div>
        </div>
      </div>
    </div>
  );
}
